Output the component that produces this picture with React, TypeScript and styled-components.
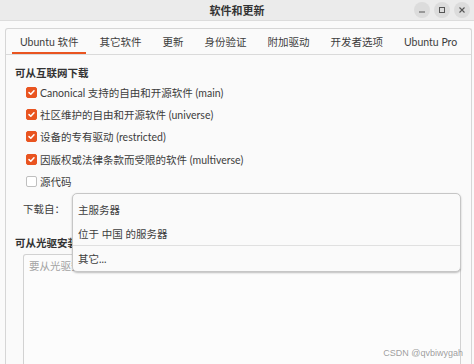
import React from 'react';
import styled, { createGlobalStyle } from 'styled-components';

const GlobalStyle = createGlobalStyle`
  html, body {
    margin: 0;
    padding: 0;
    background: #fafafa;
  }
  body {
    font-family: Lato, "Noto Sans CJK SC", sans-serif;
    color: #3d3d3d;
  }
`;

type SourceItem = {
  label: string;
  checked: boolean;
};

const sources: SourceItem[] = [
  { label: 'Canonical 支持的自由和开源软件 (main)', checked: true },
  { label: '社区维护的自由和开源软件 (universe)', checked: true },
  { label: '设备的专有驱动 (restricted)', checked: true },
  { label: '因版权或法律条款而受限的软件 (multiverse)', checked: true },
  { label: '源代码', checked: false },
];

const tabs = ['Ubuntu 软件', '其它软件', '更新', '身份验证', '附加驱动', '开发者选项', 'Ubuntu Pro'];

const App: React.FC = () => {
  return (
    <>
      <GlobalStyle />
      <Window>
        <TitleBar>
          <span />
          <Title>软件和更新</Title>
          <Controls>
            <ControlButton>
              <svg width="8" height="8" viewBox="0 0 8 8">
                <rect x="1" y="5.5" width="6" height="1" fill="#555" />
              </svg>
            </ControlButton>
            <ControlButton>
              <svg width="8" height="8" viewBox="0 0 8 8">
                <rect x="1.5" y="1.5" width="5" height="5" fill="none" stroke="#555" strokeWidth="1" />
              </svg>
            </ControlButton>
            <ControlButton>
              <svg width="8" height="8" viewBox="0 0 8 8">
                <path d="M1.5 1.5 L6.5 6.5 M6.5 1.5 L1.5 6.5" stroke="#555" strokeWidth="1.1" />
              </svg>
            </ControlButton>
          </Controls>
        </TitleBar>

        <Body>
          <Notebook>
            <TabBar>
              {tabs.map((t, i) => (
                <Tab key={t} active={i === 0}>
                  {t}
                </Tab>
              ))}
            </TabBar>

            <Content>
              <SectionTitle>可从互联网下载</SectionTitle>
              <CheckList>
                {sources.map((s) => (
                  <CheckRow key={s.label}>
                    <CheckBox checked={s.checked}>
                      {s.checked && (
                        <svg width="9" height="9" viewBox="0 0 9 9">
                          <path d="M2 4.6 L3.8 6.3 L7 2.8" fill="none" stroke="#fff" strokeWidth="1.5" strokeLinecap="round" strokeLinejoin="round" />
                        </svg>
                      )}
                    </CheckBox>
                    <span>{s.label}</span>
                  </CheckRow>
                ))}
              </CheckList>

              <DownloadRow>
                <FieldLabel>下载自：</FieldLabel>
                <Popup>
                  <PopupItem>主服务器</PopupItem>
                  <PopupItem>位于 中国 的服务器</PopupItem>
                  <Separator />
                  <PopupItem>其它...</PopupItem>
                </Popup>
              </DownloadRow>

              <SectionTitle>可从光驱安装</SectionTitle>
              <CdBox>
                <Placeholder>要从光驱安装软件，请插入安装光盘</Placeholder>
              </CdBox>
            </Content>
          </Notebook>
        </Body>
        <Watermark>CSDN @qvbiwygah</Watermark>
      </Window>
    </>
  );
};

export default App;

const Window = styled.div`
  position: relative;
  width: 474px;
  height: 364px;
  overflow: hidden;
  display: flex;
  flex-direction: column;
  background: #fafafa;
`;

const TitleBar = styled.div`
  height: 20px;
  flex: 0 0 20px;
  display: grid;
  grid-template-columns: 1fr auto 1fr;
  align-items: center;
  background: #ebebeb;
  border-bottom: 1px solid #dcdcdc;
`;

const Title = styled.div`
  font-size: 11px;
  font-weight: 700;
  color: #333;
`;

const Controls = styled.div`
  justify-self: end;
  display: flex;
  gap: 4px;
  padding-right: 4px;
`;

const ControlButton = styled.div`
  width: 16px;
  height: 16px;
  border-radius: 50%;
  background: #dcdcdc;
  display: flex;
  align-items: center;
  justify-content: center;
`;

const Body = styled.div`
  flex: 1;
  display: flex;
  padding: 7px 5px 0 5px;
  min-height: 0;
`;

const Notebook = styled.div`
  flex: 1;
  display: flex;
  flex-direction: column;
  border: 1px solid #d6d6d6;
  border-bottom: none;
  border-radius: 3px 3px 0 0;
  background: #fafafa;
  min-height: 0;
`;

const TabBar = styled.div`
  display: flex;
  gap: 5px;
  height: 25px;
  padding: 0 6px;
  border-bottom: 1px solid #dadada;
`;

const Tab = styled.div<{ active?: boolean }>`
  display: flex;
  align-items: center;
  padding: 0 8px;
  font-size: 10.5px;
  color: #3d3d3d;
  white-space: nowrap;
  box-shadow: ${(p) => (p.active ? 'inset 0 -2px 0 #e95420' : 'none')};
`;

const Content = styled.div`
  flex: 1;
  display: flex;
  flex-direction: column;
  padding: 11px 8px 0 9px;
  min-height: 0;
`;

const SectionTitle = styled.div`
  font-size: 10.5px;
  font-weight: 700;
  line-height: 14px;
  color: #333;
`;

const CheckList = styled.div`
  display: flex;
  flex-direction: column;
  margin-top: 1px;
`;

const CheckRow = styled.div`
  display: flex;
  align-items: center;
  gap: 3px;
  height: 22.3px;
  padding-left: 11px;
  font-size: 10.5px;
  white-space: nowrap;
`;

const CheckBox = styled.span<{ checked: boolean }>`
  width: 11px;
  height: 11px;
  box-sizing: border-box;
  border-radius: 2px;
  display: flex;
  align-items: center;
  justify-content: center;
  background: ${(p) => (p.checked ? '#e95420' : '#ffffff')};
  border: 1px solid ${(p) => (p.checked ? '#e95420' : '#bfbfbf')};
`;

const DownloadRow = styled.div`
  position: relative;
  height: 28px;
  display: flex;
  align-items: center;
  margin-top: 2px;
  margin-bottom: 14px;
  padding-left: 8px;
`;

const FieldLabel = styled.span`
  font-size: 10.5px;
`;

const Popup = styled.div`
  position: absolute;
  left: 57px;
  top: -1px;
  width: 389px;
  box-sizing: border-box;
  padding: 3px 0 1px;
  background: #fafafa;
  border: 1px solid #c6c6c6;
  border-radius: 5px;
  box-shadow: 0 1px 2px rgba(0, 0, 0, 0.25);
  z-index: 2;
`;

const PopupItem = styled.div`
  height: 24px;
  display: flex;
  align-items: center;
  padding-left: 5px;
  font-size: 10.5px;
  color: #3d3d3d;
`;

const Separator = styled.div`
  height: 1px;
  background: #e0e0e0;
`;

const CdBox = styled.div`
  flex: 1;
  margin: 4px 2px 0 8px;
  border: 1px solid #d2d2d2;
  border-bottom: none;
  border-radius: 3px 3px 0 0;
  background: #fcfcfc;
  padding: 5px 5px;
`;

const Placeholder = styled.div`
  font-size: 10.5px;
  line-height: 12px;
  color: #a3a3a3;
  white-space: nowrap;
`;

const Watermark = styled.div`
  position: absolute;
  right: 11px;
  bottom: 6px;
  font-family: "Liberation Sans", sans-serif;
  font-size: 9px;
  color: rgba(140, 140, 140, 0.85);
`;
